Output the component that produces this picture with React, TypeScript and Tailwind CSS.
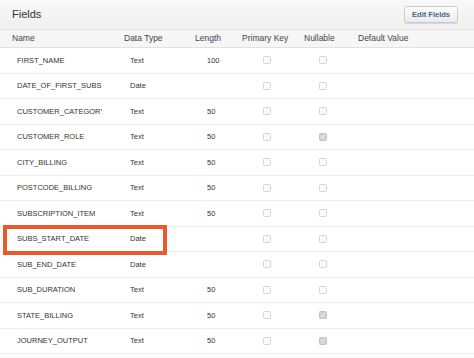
import React from "react";

type Field = {
  name: string;
  type: string;
  length?: string;
  nullable?: boolean;
};

const fields: Field[] = [
  { name: "FIRST_NAME", type: "Text", length: "100" },
  { name: "DATE_OF_FIRST_SUBS", type: "Date" },
  { name: "CUSTOMER_CATEGORY", type: "Text", length: "50" },
  { name: "CUSTOMER_ROLE", type: "Text", length: "50", nullable: true },
  { name: "CITY_BILLING", type: "Text", length: "50" },
  { name: "POSTCODE_BILLING", type: "Text", length: "50" },
  { name: "SUBSCRIPTION_ITEM", type: "Text", length: "50" },
  { name: "SUBS_START_DATE", type: "Date" },
  { name: "SUB_END_DATE", type: "Date" },
  { name: "SUB_DURATION", type: "Text", length: "50" },
  { name: "STATE_BILLING", type: "Text", length: "50", nullable: true },
  { name: "JOURNEY_OUTPUT", type: "Text", length: "50", nullable: true },
];

const cols = "grid grid-cols-[124px_71px_47px_62px_54px_1fr]";

function Check({ checked }: { checked?: boolean }) {
  return (
    <span
      className={
        "flex h-[8px] w-[8px] items-center justify-center rounded-[1.5px] border " +
        (checked ? "border-[#c4c4c4] bg-[#d2d2d2]" : "border-[#d6d6d6] bg-[#fafafa]")
      }
    >
      {checked && (
        <svg viewBox="0 0 8 8" className="h-[7px] w-[7px]">
          <path d="M1.5 4.2 L3.2 5.8 L6.5 2" fill="none" stroke="#f4f4f4" strokeWidth="1.3" />
        </svg>
      )}
    </span>
  );
}

export default function App() {
  return (
    <div className="relative h-[358px] w-[474px] overflow-hidden bg-white font-['Liberation_Sans',Arial,sans-serif] text-[#333]">
      <div className="flex h-[29px] items-center justify-between bg-gradient-to-b from-[#f8f8f8] to-[#f0f0f0] pl-[12px] pr-[16px]">
        <span className="text-[11px] text-[#333]">Fields</span>
        <button className="h-[17px] rounded-[3px] border border-[#c8ccd2] bg-gradient-to-b from-[#fdfdfd] to-[#e9ebee] px-[7px] text-[7.5px] font-bold text-[#44648a] shadow-[0_1px_0_#d8d8d8]">
          Edit Fields
        </button>
      </div>

      <div className={cols + " h-[19px] items-center border-y border-[#e2e2e2] bg-[#f6f6f6] text-[8.5px] text-[#444]"}>
        <span className="pl-[12px]">Name</span>
        <span>Data Type</span>
        <span>Length</span>
        <span>Primary Key</span>
        <span>Nullable</span>
        <span>Default Value</span>
      </div>

      {fields.map((f) => (
        <div
          key={f.name}
          className={cols + " h-[25.5px] items-center border-b border-[#ececec] text-[7.5px] text-[#333]"}
        >
          <span className="ml-[17px] w-[85px] overflow-hidden whitespace-nowrap">{f.name}</span>
          <span className="pl-[6px]">{f.type}</span>
          <span className="pl-[12px]">{f.length ?? ""}</span>
          <span className="flex pl-[21px]">
            <Check />
          </span>
          <span className="flex pl-[15px]">
            <Check checked={f.nullable} />
          </span>
          <span />
        </div>
      ))}

      <div className="pointer-events-none absolute left-[3px] top-[225px] h-[30px] w-[164px] border-[4.5px] border-[#e9592c]" />
    </div>
  );
}
